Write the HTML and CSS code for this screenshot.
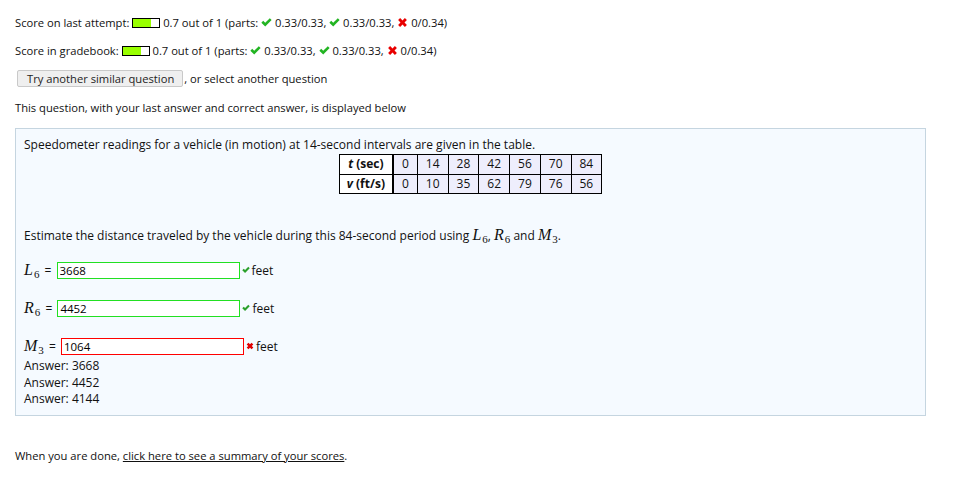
FILE: index.html
```html
<!DOCTYPE html>
<html>
<head>
<meta charset="utf-8">
<link rel="stylesheet" href="styles.css">
</head>
<body>
<div class="page">
  <p class="score first">Score on last attempt: <span class="bar"><span class="fill" style="width:70%"></span></span> 0.7 out of 1 (parts: <svg class="ok" viewBox="0 0 12 12"><path d="M0.4 6.2 L2.4 4.2 L4.6 6.4 L9.6 1.4 L11.6 3.4 L4.6 10.4 Z"/></svg> 0.33/0.33, <svg class="ok" viewBox="0 0 12 12"><path d="M0.4 6.2 L2.4 4.2 L4.6 6.4 L9.6 1.4 L11.6 3.4 L4.6 10.4 Z"/></svg> 0.33/0.33, <svg class="bad" viewBox="0 0 12 12"><path d="M1.2 3.4 L3.4 1.2 L6 3.8 L8.6 1.2 L10.8 3.4 L8.2 6 L10.8 8.6 L8.6 10.8 L6 8.2 L3.4 10.8 L1.2 8.6 L3.8 6 Z"/></svg> 0/0.34)</p>
  <p class="score">Score in gradebook: <span class="bar"><span class="fill" style="width:70%"></span></span> 0.7 out of 1 (parts: <svg class="ok" viewBox="0 0 12 12"><path d="M0.4 6.2 L2.4 4.2 L4.6 6.4 L9.6 1.4 L11.6 3.4 L4.6 10.4 Z"/></svg> 0.33/0.33, <svg class="ok" viewBox="0 0 12 12"><path d="M0.4 6.2 L2.4 4.2 L4.6 6.4 L9.6 1.4 L11.6 3.4 L4.6 10.4 Z"/></svg> 0.33/0.33, <svg class="bad" viewBox="0 0 12 12"><path d="M1.2 3.4 L3.4 1.2 L6 3.8 L8.6 1.2 L10.8 3.4 L8.2 6 L10.8 8.6 L8.6 10.8 L6 8.2 L3.4 10.8 L1.2 8.6 L3.8 6 Z"/></svg> 0/0.34)</p>
  <p class="tryrow"><button class="btn">Try another similar question</button>, or select another question</p>
  <p class="note">This question, with your last answer and correct answer, is displayed below</p>

  <div class="question">
    <p class="intro">Speedometer readings for a vehicle (in motion) at 14-second intervals are given in the table.</p>
    <table class="data">
      <tr><th><i>t</i> (sec)</th><td>0</td><td>14</td><td>28</td><td>42</td><td>56</td><td>70</td><td>84</td></tr>
      <tr><th><i>v</i> (ft/s)</th><td>0</td><td>10</td><td>35</td><td>62</td><td>79</td><td>76</td><td>56</td></tr>
    </table>
    <p class="task">Estimate the distance traveled by the vehicle during this 84-second period using <span class="m">L<sub>6</sub></span>, <span class="m">R<sub>6</sub></span> and <span class="m">M<sub>3</sub></span>.</p>

    <div class="ansrow r1"><span class="m">L<sub>6</sub></span> = <input class="ans good" value="3668"><svg class="tick" viewBox="0 0 12 12"><path d="M0.4 6.2 L2.6 4 L4.6 6 L9.4 1.2 L11.6 3.4 L4.6 10.4 Z"/></svg><span>feet</span></div>
    <div class="ansrow r2"><span class="m">R<sub>6</sub></span> = <input class="ans good" value="4452"><svg class="tick" viewBox="0 0 12 12"><path d="M0.4 6.2 L2.6 4 L4.6 6 L9.4 1.2 L11.6 3.4 L4.6 10.4 Z"/></svg><span>feet</span></div>
    <div class="ansrow r3"><span class="m">M<sub>3</sub></span> = <input class="ans wrong" value="1064"><svg class="cross" viewBox="0 0 12 12"><path d="M1 3.6 L3.6 1 L6 3.4 L8.4 1 L11 3.6 L8.6 6 L11 8.4 L8.4 11 L6 8.6 L3.6 11 L1 8.4 L3.4 6 Z"/></svg><span>feet</span></div>
    <div class="answers">
      <div>Answer: 3668</div>
      <div>Answer: 4452</div>
      <div>Answer: 4144</div>
    </div>
  </div>

  <p class="done">When you are done, <a href="#">click here to see a summary of your scores</a>.</p>
</div>
</body>
</html>
```

FILE: styles.css
```css
html, body {
  margin: 0;
  padding: 0;
  background: #fff;
}
body {
  font-family: "Open Sans", "Noto Sans", sans-serif;
  font-size: 11.2px;
  color: #111;
}
.page {
  padding: 13px 31px 0 15px;
}
p { margin: 0; }
.score {
  line-height: 20px;
  margin-bottom: 8px;
}
.bar {
  display: inline-block;
  width: 26px;
  height: 8px;
  border: 1px solid #000;
  vertical-align: -1px;
  background: #fff;
}
.fill {
  display: block;
  height: 100%;
  background: #99ff00;
}
svg.ok, svg.bad {
  width: 11px;
  height: 11px;
  vertical-align: -1px;
}
svg.ok path { fill: #22b422; }
svg.bad path { fill: #e80000; }
.tryrow {
  margin-top: 1px;
  line-height: 20px;
}
.btn {
  font-family: inherit;
  font-size: 11.2px;
  color: #222;
  background: #efefef;
  border: 1px solid #c9c9c9;
  border-radius: 2px;
  padding: 1px 8px 1px 9px;
  margin: 0 1px 0 2px;
  height: 17px;
  line-height: 13px;
}
.note {
  margin-top: 9px;
  line-height: 20px;
}
.question {
  margin-top: 10px;
  background: #f5faff;
  border: 1px solid #c5d5e0;
  padding: 7px 8px 8px 8px;
  height: 271px;
  font-size: 12px;
}
.intro { line-height: 18px; }
.data {
  border-collapse: collapse;
  margin: 0 auto;
  line-height: 18.5px;
}
.data th, .data td {
  border: 1px solid #000;
  padding: 0 8px;
  text-align: center;
}
.data th {
  background: #fff;
  font-weight: bold;
  border-right: 2px solid #000;
  padding: 0 7px 0 7px;
}
.data td { background: #eeeefc; font-weight: normal; }
.task {
  margin-top: 31px;
  line-height: 20px;
}
.m {
  font-family: "Liberation Serif", "DejaVu Serif", serif;
  font-style: italic;
  font-size: 16px;
}
.m sub {
  font-style: normal;
  font-size: 11px;
  vertical-align: -3px;
  line-height: 0;
  margin-left: 1px;
}
.ansrow {
  display: flex;
  align-items: center;
  height: 20px;
  white-space: pre;
}
.ansrow .m { margin-right: 2px; }
.r1 { margin-top: 14px; }
.r2 { margin-top: 18px; }
.r3 { margin-top: 18px; }
.ans {
  font-family: inherit;
  font-size: 11.5px;
  color: #000;
  width: 177px;
  height: 15px;
  padding: 0 2px;
  margin: 0 2px 0 2px;
  background: #fff;
  box-sizing: content-box;
}
.good { border: 1px solid #22e022; }
.wrong { border: 1px solid #ff0000; }
.tick, .cross {
  width: 8px;
  height: 8px;
  margin-right: 2px;
}
.tick path { fill: #2ba02b; }
.cross path { fill: #e00000; }
.answers {
  line-height: 16.5px;
  margin-top: 2px;
}
.done {
  margin-top: 30px;
  line-height: 20px;
}
.done a {
  color: #111;
  text-decoration: underline;
}
```
